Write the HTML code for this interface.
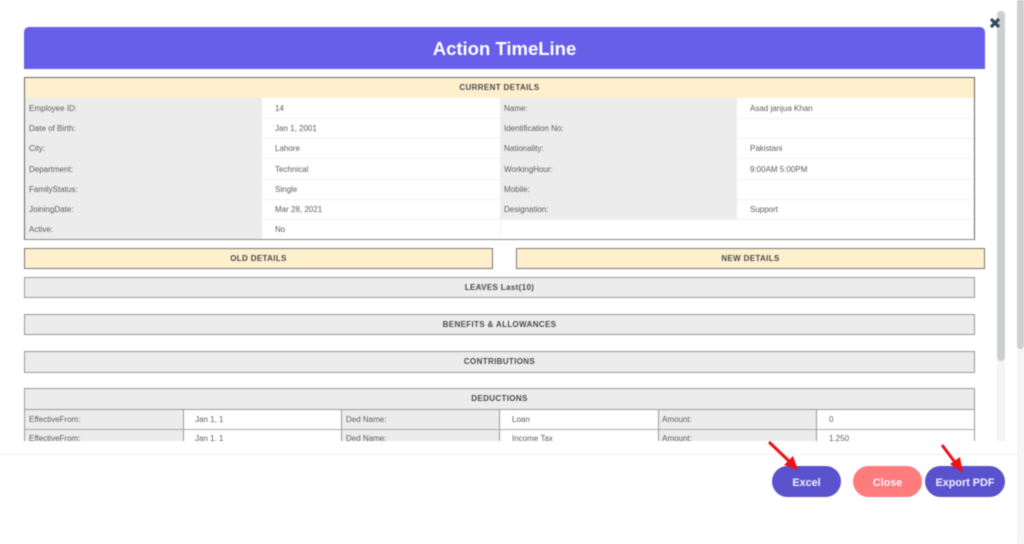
<!DOCTYPE html>
<html><head><meta charset="utf-8"><title>Action TimeLine</title>
<style>
html,body{margin:0;padding:0;width:1024px;height:544px;overflow:hidden;background:#fff}
body{position:relative;font-family:"Liberation Sans",sans-serif}
div{position:absolute;box-sizing:border-box}
#w{left:0;top:0;width:1024px;height:544px;overflow:hidden;filter:blur(.4px)}
.t{font-size:8px;color:#5e5e5e;white-space:nowrap;line-height:14px}
.h{font-size:8px;font-weight:bold;color:#4a4a4a;letter-spacing:.35px;text-align:center;border:1px solid #999;background:#ececec;line-height:19px;white-space:nowrap}
.y{background:#feefcd;border-color:#777}
.l{background:#ececec}
.b{top:466px;height:31px;border-radius:16px;color:#f4f2ff;font-size:10.8px;font-weight:bold;text-align:center;line-height:35px;background:#5a52cc}
.r{height:1px;background:#f1f1f1}
.v{background:#999;width:1px}
</style></head><body><div id="w">
<div style="left:24px;top:27px;width:961px;height:42px;background:#675ee9;border-radius:5px 5px 0 0;color:#fff;font-size:18.5px;font-weight:bold;text-align:center;line-height:44px">Action TimeLine</div>

<div style="left:24px;top:77px;width:951px;height:163px;border:1px solid #666;border-bottom-color:#888"></div>
<div class="h y" style="left:25px;top:78px;width:949px;height:20px;border:0;background:#feefcd;line-height:19px">CURRENT DETAILS</div>
<div class="l" style="left:25px;top:98px;width:237px;height:141px"></div>
<div class="l" style="left:500px;top:98px;width:237px;height:121px"></div>
<div class="r" style="left:262px;top:118px;width:238px"></div><div class="r" style="left:737px;top:118px;width:237px"></div>
<div class="r" style="left:262px;top:138px;width:238px"></div><div class="r" style="left:737px;top:138px;width:237px"></div>
<div class="r" style="left:262px;top:158px;width:238px"></div><div class="r" style="left:737px;top:158px;width:237px"></div>
<div class="r" style="left:262px;top:179px;width:238px"></div><div class="r" style="left:737px;top:179px;width:237px"></div>
<div class="r" style="left:262px;top:199px;width:238px"></div><div class="r" style="left:737px;top:199px;width:237px"></div>
<div class="r" style="left:262px;top:219px;width:712px"></div>
<div style="left:500px;top:219px;width:1px;height:20px;background:#f1f1f1"></div>

<div class="t" style="left:29px;top:102px">Employee ID:</div><div class="t" style="left:275px;top:102px">14</div><div class="t" style="left:504px;top:102px">Name:</div><div class="t" style="left:750px;top:102px">Asad janjua Khan</div>
<div class="t" style="left:29px;top:122px">Date of Birth:</div><div class="t" style="left:275px;top:122px">Jan 1, 2001</div><div class="t" style="left:504px;top:122px">Identification No:</div>
<div class="t" style="left:29px;top:142px">City:</div><div class="t" style="left:275px;top:142px">Lahore</div><div class="t" style="left:504px;top:142px">Nationality:</div><div class="t" style="left:750px;top:142px">Pakistani</div>
<div class="t" style="left:29px;top:163px">Department:</div><div class="t" style="left:275px;top:163px">Technical</div><div class="t" style="left:504px;top:163px">WorkingHour:</div><div class="t" style="left:750px;top:163px">9:00AM 5:00PM</div>
<div class="t" style="left:29px;top:183px">FamilyStatus:</div><div class="t" style="left:275px;top:183px">Single</div><div class="t" style="left:504px;top:183px">Mobile:</div>
<div class="t" style="left:29px;top:203px">JoiningDate:</div><div class="t" style="left:275px;top:203px">Mar 28, 2021</div><div class="t" style="left:504px;top:203px">Designation:</div><div class="t" style="left:750px;top:203px">Support</div>
<div class="t" style="left:29px;top:223px">Active:</div><div class="t" style="left:275px;top:223px">No</div>

<div class="h y" style="left:24px;top:248px;width:469px;height:21px">OLD DETAILS</div>
<div class="h y" style="left:516px;top:248px;width:469px;height:21px">NEW DETAILS</div>
<div class="h" style="left:24px;top:277px;width:951px;height:21px">LEAVES Last(10)</div>
<div class="h" style="left:24px;top:314px;width:951px;height:21px">BENEFITS &amp; ALLOWANCES</div>
<div class="h" style="left:24px;top:351px;width:951px;height:22px">CONTRIBUTIONS</div>

<div style="left:0;top:388px;width:990px;height:53px;overflow:hidden">
<div class="h" style="left:24px;top:0;width:951px;height:22px;line-height:19px">DEDUCTIONS</div>
<div class="l" style="left:25px;top:22px;width:158px;height:31px"></div>
<div class="l" style="left:342px;top:22px;width:157px;height:31px"></div>
<div class="l" style="left:658px;top:22px;width:158px;height:31px"></div>
<div class="v" style="left:24px;top:22px;height:31px"></div>
<div class="v" style="left:183px;top:22px;height:31px"></div>
<div class="v" style="left:341px;top:22px;height:31px"></div>
<div class="v" style="left:499px;top:22px;height:31px"></div>
<div class="v" style="left:658px;top:22px;height:31px"></div>
<div class="v" style="left:816px;top:22px;height:31px"></div>
<div class="v" style="left:974px;top:22px;height:31px"></div>
<div style="left:24px;top:41px;width:951px;height:1px;background:#aaa"></div>
<div class="t" style="left:29px;top:25px">EffectiveFrom:</div><div class="t" style="left:195px;top:25px">Jan 1, 1</div><div class="t" style="left:346px;top:25px">Ded Name:</div><div class="t" style="left:512px;top:25px">Loan</div><div class="t" style="left:662px;top:25px">Amount:</div><div class="t" style="left:829px;top:25px">0</div>
<div class="t" style="left:29px;top:44px">EffectiveFrom:</div><div class="t" style="left:195px;top:44px">Jan 1, 1</div><div class="t" style="left:346px;top:44px">Ded Name:</div><div class="t" style="left:512px;top:44px">Income Tax</div><div class="t" style="left:662px;top:44px">Amount:</div><div class="t" style="left:829px;top:44px">1,250</div>
</div>

<div style="left:997px;top:11px;width:8px;height:430px;background:#f4f4f4"></div>
<div style="left:997px;top:11px;width:8px;height:350px;background:#cdcfce;border-radius:4px"></div>
<div style="left:1017px;top:0;width:7px;height:544px;background:#f5f5f5"></div>
<div style="left:1017px;top:0;width:7px;height:349px;background:#cfcfcf;border-radius:0 0 4px 4px"></div>
<div style="left:0;top:454px;width:1017px;height:1px;background:#efefef"></div>

<svg style="position:absolute;left:989px;top:17px" width="12" height="12" viewBox="0 0 12 12"><path d="M2 2L10 10M10 2L2 10" stroke="#34495e" stroke-width="3.2"/></svg>

<div class="b" style="left:772px;width:69px">Excel</div>
<div class="b" style="left:853px;width:69px;background:#fe7c7c">Close</div>
<div class="b" style="left:925px;width:80px">Export PDF</div>

<svg style="position:absolute;left:0;top:0" width="1024" height="544" viewBox="0 0 1024 544"><path d="M769 442L790 462M942 445L957 465" stroke="#f01018" stroke-width="3" fill="none"/><path d="M798 470L784 465L793 456Z M963 473L950 464L960 457Z" fill="#f01018"/></svg>
</div></body></html>
